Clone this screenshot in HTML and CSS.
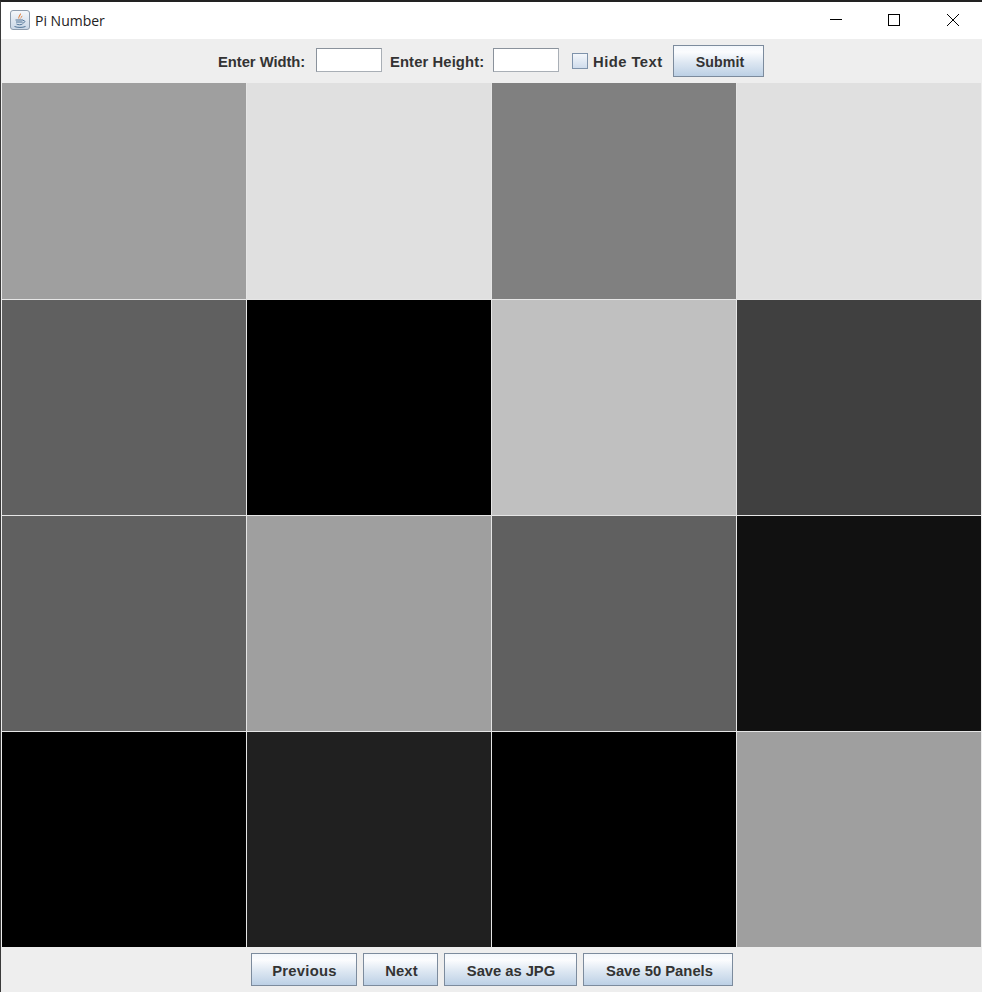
FILE: index.html
```html
<!DOCTYPE html>
<html lang="en">
<head>
    <meta charset="UTF-8">
    <title>Pi Number</title>
    <link rel="stylesheet" href="styles.css">
</head>
<body>
    <div class="window">
        <div class="titlebar">
            <svg class="appicon" width="20" height="20" viewBox="0 0 20 20">
                <defs>
                    <linearGradient id="iconbg" x1="0" y1="0" x2="0" y2="1">
                        <stop offset="0" stop-color="#f6f8fb"/>
                        <stop offset="1" stop-color="#c9d6e6"/>
                    </linearGradient>
                </defs>
                <rect x="0.5" y="0.5" width="19" height="19" rx="2.5" fill="url(#iconbg)" stroke="#8e9cad"/>
                <path d="M10.5 3 C12 5.5 8 6.5 9.5 9.5 C7 7.5 9.5 5.5 10.5 3 Z M12.5 5.5 C12.5 7 10.5 7.5 11 9.5 C10 8 11 6.5 12.5 5.5 Z" fill="#e0742a"/>
                <path d="M5.5 10 H13 M6 12 H12.5 M6.5 14 C8 15 11 15 12.5 14 M13 10.5 C15.5 10 15.5 13 12.5 13" fill="none" stroke="#4f7396" stroke-width="1"/>
                <path d="M4.5 16.5 C7.5 17.7 12.5 17.7 15.5 16.5" fill="none" stroke="#4f7396" stroke-width="1"/>
            </svg>
            <span class="title">Pi Number</span>
            <div class="winctrls">
                <svg class="ctrl ctrl-min" width="12" height="12" viewBox="0 0 12 12"><path d="M0 5.5 H12" stroke="#000" stroke-width="1" fill="none"/></svg>
                <svg class="ctrl ctrl-max" width="12" height="12" viewBox="0 0 12 12"><rect x="0.5" y="0.5" width="11" height="11" stroke="#000" stroke-width="1" fill="none"/></svg>
                <svg class="ctrl ctrl-close" width="12" height="12" viewBox="0 0 12 12"><path d="M0 0 L12 12 M12 0 L0 12" stroke="#000" stroke-width="1" fill="none"/></svg>
            </div>
        </div>

        <div class="toolbar">
            <label class="lbl lbl-width">Enter Width:</label>
            <input class="field field-width" type="text">
            <label class="lbl lbl-height">Enter Height:</label>
            <input class="field field-height" type="text">
            <span class="check"></span>
            <label class="lbl lbl-hide">Hide Text</label>
            <button class="btn btn-submit">Submit</button>
        </div>

        <div class="panels">
            <div class="g9f"></div>
            <div class="ge0"></div>
            <div class="g80"></div>
            <div class="ge0"></div>
            <div class="g60"></div>
            <div class="g00"></div>
            <div class="gc0"></div>
            <div class="g40"></div>
            <div class="g60"></div>
            <div class="g9f"></div>
            <div class="g60"></div>
            <div class="g11"></div>
            <div class="g00"></div>
            <div class="g20"></div>
            <div class="g00"></div>
            <div class="g9f"></div>
        </div>

        <div class="bottombar">
            <button class="btn btn-prev">Previous</button>
            <button class="btn btn-next">Next</button>
            <button class="btn btn-jpg">Save as JPG</button>
            <button class="btn btn-panels">Save 50 Panels</button>
        </div>
    </div>
</body>
</html>
```

FILE: styles.css
```css
*{
    margin: 0;
    padding: 0;
    box-sizing: border-box;
}
html,body{
    width: 982px;
    height: 992px;
    overflow: hidden;
    background-color: #eeeeee;
}
body{
    font: bold 14.8px "Liberation Sans", Arial, sans-serif;
    color: #333333;
}
.window{
    width: 982px;
    height: 992px;
    display: flex;
    flex-direction: column;
    border-top: 2px solid #222222;
    border-left: 1px solid #3a3a3a;
}

/* title bar */
.titlebar{
    height: 37px;
    background-color: #ffffff;
    display: flex;
    align-items: center;
    padding-left: 9px;
}
.appicon{
    margin-right: 5px;
    margin-top: -1px;
}
.title{
    font: normal 14px "Open Sans", "Noto Sans", sans-serif;
    color: #222222;
}
.winctrls{
    margin-left: auto;
    display: flex;
    align-items: center;
    padding-right: 23px;
    margin-top: -1px;
}
.ctrl{
    display: block;
}
.ctrl-min{
    margin-right: 46px;
}
.ctrl-max{
    margin-right: 47px;
}

/* input row */
.toolbar{
    height: 44px;
    background-color: #eeeeee;
    display: flex;
    align-items: center;
    padding-left: 217px;
}
.lbl{
    letter-spacing: 0.1px;
    white-space: nowrap;
    margin-top: 1px;
}
.lbl-width{
    width: 98px;
    letter-spacing: -0.05px;
}
.lbl-height{
    width: 103px;
}
.lbl-hide{
    width: 80px;
    letter-spacing: 0.45px;
}
.field{
    width: 66px;
    height: 24px;
    background-color: #ffffff;
    border: 1px solid #8a929c;
    border-right-color: #a9afb6;
    border-bottom-color: #a9afb6;
    outline: none;
}
.field-width{
    margin-right: 8px;
    margin-top: -2px;
}
.field-height{
    margin-right: 13px;
    margin-top: -2px;
}
.check{
    display: block;
    width: 16px;
    height: 16px;
    margin-right: 5px;
    border: 1px solid #7f93ab;
    background: linear-gradient(#f4f7fb, #cfdcec);
}

/* buttons */
.btn{
    font: bold 14.8px "Liberation Sans", Arial, sans-serif;
    letter-spacing: 0.1px;
    color: #333333;
    height: 33px;
    padding-top: 2px;
    padding-left: 2px;
    border: 1px solid #7c8b9d;
    background: linear-gradient(#f3f7fb 0%, #fbfcfe 20%, #dde7f2 55%, #bcd0e5 100%);
}
.btn-submit{
    width: 91px;
    height: 32px;
    margin-top: -1px;
    font-size: 14.2px;
    padding-left: 3px;
}
.btn-prev{
    width: 106px;
    padding-left: 1px;
    letter-spacing: 0.25px;
}
.btn-next{
    width: 75px;
}
.btn-jpg{
    width: 133px;
    padding-left: 1px;
    letter-spacing: -0.05px;
}
.btn-panels{
    width: 150px;
    padding-left: 3px;
    letter-spacing: 0;
}

/* the 4x4 panels, top row is a pixel taller */
.panels{
    margin-left: 1px;
    width: 979px;
    height: 864px;
    display: grid;
    grid-template-columns: repeat(4, 244px);
    grid-template-rows: 216px repeat(3, 215px);
    gap: 1px;
    background-color: #e6e6e6;
}
.g00{ background-color: #000000; }
.g11{ background-color: #111111; }
.g20{ background-color: #202020; }
.g40{ background-color: #404040; }
.g60{ background-color: #606060; }
.g80{ background-color: #808080; }
.g9f{ background-color: #9f9f9f; }
.gc0{ background-color: #c0c0c0; }
.ge0{ background-color: #e0e0e0; }

.bottombar{
    flex: 1;
    background-color: #eeeeee;
    display: flex;
    align-items: flex-start;
    gap: 6px;
    padding-top: 6px;
    padding-left: 250px;
}
```
